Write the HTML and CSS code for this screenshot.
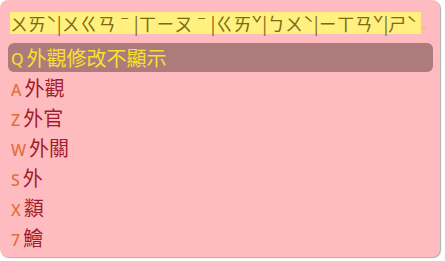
FILE: index.html
```html
<!DOCTYPE html>
<html>
<head>
<meta charset="utf-8">
<link rel="stylesheet" href="styles.css">
</head>
<body>
<div class="panel">
  <div class="comp-row">
    <span class="comp">ㄨㄞˋ|ㄨㄍㄢˉ|ㄒㄧㄡˉ|ㄍㄞˇ|ㄅㄨˋ|ㄧㄒㄢˇ|ㄕˋ</span><span class="caret">^</span>
  </div>
  <ul class="list">
    <li class="row selected"><span class="key">Q</span><span class="word">外觀修改不顯示</span></li>
    <li class="row"><span class="key">A</span><span class="word">外觀</span></li>
    <li class="row"><span class="key">Z</span><span class="word">外官</span></li>
    <li class="row"><span class="key">W</span><span class="word">外關</span></li>
    <li class="row"><span class="key">S</span><span class="word">外</span></li>
    <li class="row"><span class="key">X</span><span class="word">纇</span></li>
    <li class="row"><span class="key">7</span><span class="word">鱠</span></li>
  </ul>
</div>
</body>
</html>
```

FILE: styles.css
```css
html, body {
  margin: 0;
  padding: 0;
  background: #ffffff;
}
body {
  width: 445px;
  height: 261px;
  overflow: hidden;
}
.panel {
  width: 440px;
  height: 257px;
  background: #ffbcc0;
  border-radius: 8px;
  box-shadow: 1px 1px 1px rgba(120, 120, 120, 0.6);
  box-sizing: border-box;
  padding: 12px 7px 0 8px;
  font-family: "Noto Sans CJK TC", "Noto Sans", sans-serif;
}
.comp-row {
  display: flex;
  align-items: flex-end;
  padding-left: 2px;
  height: 22px;
}
.comp {
  display: inline-block;
  background: #fff080;
  color: #7d6a12;
  font-size: 18px;
  line-height: 22px;
  height: 22px;
  padding-right: 4px;
  white-space: nowrap;
}
.caret {
  color: #f0c020;
  font-family: "Liberation Sans", sans-serif;
  font-size: 9px;
  line-height: 9px;
  margin-left: 1px;
}
.list {
  list-style: none;
  margin: 9px 0 0 0;
  padding: 0;
}
.row {
  display: flex;
  align-items: center;
  height: 30px;
  padding-left: 3px;
  border-radius: 6px;
}
.row.selected {
  background: #ad7b7b;
  height: 29px;
  margin-bottom: 1px;
}
.key {
  font-family: "Noto Sans", sans-serif;
  font-size: 16px;
  font-weight: 500;
  color: #e2703a;
  margin-right: 3px;
  margin-top: 3px;
}
.word {
  font-size: 20px;
  color: #a01e2c;
  line-height: 30px;
}
.selected .key {
  color: #f5dc30;
}
.selected .word {
  color: #f8e030;
}
```
